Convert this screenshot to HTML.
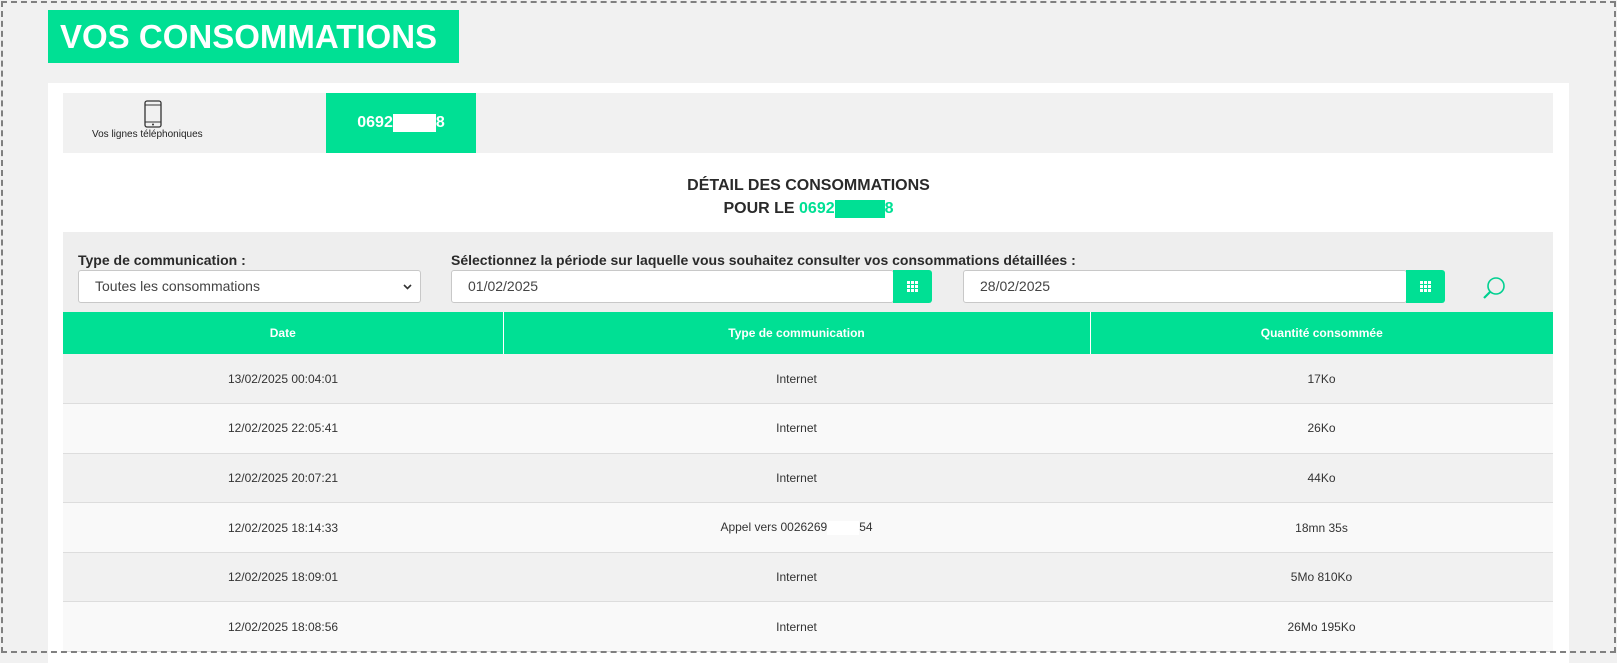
<!DOCTYPE html>
<html><head><meta charset="utf-8"><style>
*{box-sizing:border-box;margin:0;padding:0}
body{width:1617px;height:654px;overflow:hidden;background:#f1f1f1;font-family:"Liberation Sans",sans-serif;color:#222;position:relative}
.frame{position:absolute;left:1px;top:1px;width:1615px;height:652px;border:2px dashed #808080}
.abs{position:absolute}
.title{left:48px;top:10px;width:411px;height:53px;background:#00e094;color:#fff;font-weight:bold;font-size:33px;line-height:53px;padding-left:12px;white-space:nowrap;overflow:hidden}
.panel{left:48px;top:83px;width:1521px;height:580px;background:#fff}
.tabs{left:63px;top:93px;width:1490px;height:60px;background:#f1f1f1}
.tab{left:326px;top:93px;width:150px;height:60px;background:#00e094;color:#fff;font-weight:bold;font-size:16px;line-height:60px;text-align:center}
.h{left:0;width:1617px;text-align:center;font-weight:bold;font-size:16px;color:#2a2a2a}
.filt{left:63px;top:232px;width:1490px;height:80px;background:#eeeeee}
.lbl{font-weight:bold;font-size:14px;color:#2a2a2a}
.inp{background:#fff;border:1px solid #c8c8c8;border-radius:3px;height:33px;font-size:14px;color:#444;line-height:31px;padding-left:16px}
.btn{background:#00e094;border-radius:0 3px 3px 0;width:39px;height:33px}
.grid{position:absolute;left:14px;top:11px;width:11px;height:11px;background:
linear-gradient(#00e094,#00e094) 3px 0/1px 11px no-repeat,linear-gradient(#00e094,#00e094) 7px 0/1px 11px no-repeat,
linear-gradient(#00e094,#00e094) 0 3px/11px 1px no-repeat,linear-gradient(#00e094,#00e094) 0 7px/11px 1px no-repeat,#fff}
table{position:absolute;left:63px;top:312px;width:1490px;border-collapse:collapse;font-size:12px}
th{background:#00e094;color:#fff;height:42px;font-weight:bold;border-right:1px solid #fff}
th:last-child{border-right:none}
td{height:49.6px;text-align:center;border-bottom:1px solid #ddd;color:#333}
tr:nth-child(even) td{background:#f1f1f1}
tr:nth-child(odd) td{background:#f9f9f9}
.mask{display:inline-block;background:#fff;vertical-align:middle}
</style></head><body>
<div class="abs title">VOS CONSOMMATIONS</div>
<div class="abs panel"></div>
<div class="abs tabs"></div>
<svg class="abs" style="left:144px;top:100px" width="18" height="28" viewBox="0 0 18 28"><rect x="1" y="1" width="16" height="26" rx="2" fill="none" stroke="#333" stroke-width="1.3"/><line x1="1" y1="5" x2="17" y2="5" stroke="#333"/><line x1="1" y1="22" x2="17" y2="22" stroke="#333"/><circle cx="9" cy="24.5" r="1" fill="#333"/></svg>
<div class="abs" style="left:92px;top:129px;font-size:10px;color:#222">Vos lignes téléphoniques</div>
<div class="abs tab">0692<span class="mask" style="width:43px;height:18px"></span>8</div>
<div class="abs h" style="top:177px">DÉTAIL DES CONSOMMATIONS</div>
<div class="abs h" style="top:200px">POUR LE <span style="color:#00e094">0692<span class="mask" style="width:50px;height:18px;background:#00e094"></span>8</span></div>
<div class="abs filt"></div>
<div class="abs lbl" style="left:78px;top:252px">Type de communication :</div>
<div class="abs lbl" style="left:451px;top:252px">Sélectionnez la période sur laquelle vous souhaitez consulter vos consommations détaillées :</div>
<div class="abs inp" style="left:78px;top:270px;width:343px">Toutes les consommations<svg style="position:absolute;right:8px;top:13px" width="9" height="6"><path d="M1 1L4.5 4.5L8 1" fill="none" stroke="#333" stroke-width="1.6"/></svg></div>
<div class="abs inp" style="left:451px;top:270px;width:443px">01/02/2025</div>
<div class="abs btn" style="left:893px;top:270px"><div class="grid"></div></div>
<div class="abs inp" style="left:963px;top:270px;width:444px">28/02/2025</div>
<div class="abs btn" style="left:1406px;top:270px"><div class="grid"></div></div>
<svg class="abs" style="left:1482px;top:276px" width="24" height="24" viewBox="0 0 24 24"><circle cx="14" cy="10" r="8" fill="none" stroke="#00d090" stroke-width="1.6"/><path d="M8.5 15.5L2 22" stroke="#00d090" stroke-width="2.2"/></svg>
<table>
<tr><th style="width:440px">Date</th><th style="width:587px">Type de communication</th><th>Quantité consommée</th></tr>
<tr><td>13/02/2025 00:04:01</td><td>Internet</td><td>17Ko</td></tr>
<tr><td>12/02/2025 22:05:41</td><td>Internet</td><td>26Ko</td></tr>
<tr><td>12/02/2025 20:07:21</td><td>Internet</td><td>44Ko</td></tr>
<tr><td>12/02/2025 18:14:33</td><td>Appel vers 0026269<span class="mask" style="width:32px;height:14px"></span>54</td><td>18mn 35s</td></tr>
<tr><td>12/02/2025 18:09:01</td><td>Internet</td><td>5Mo 810Ko</td></tr>
<tr><td>12/02/2025 18:08:56</td><td>Internet</td><td>26Mo 195Ko</td></tr>
</table>
<div class="frame"></div>
</body></html>
